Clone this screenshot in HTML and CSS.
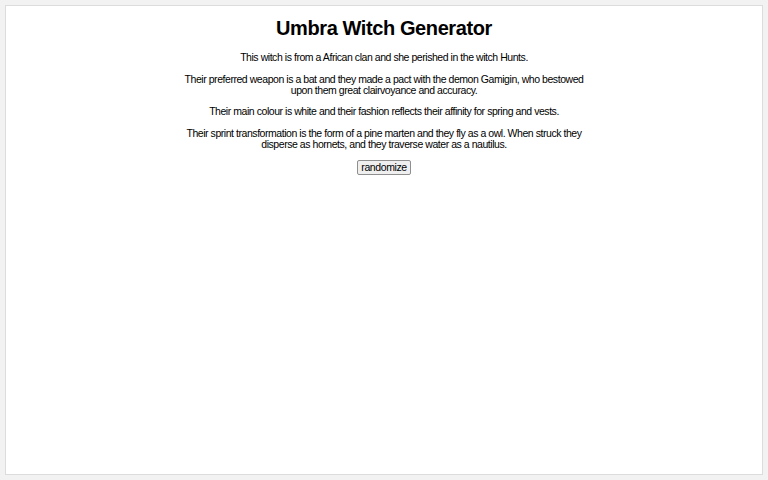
FILE: index.html
```html
<!DOCTYPE html>
<html lang="en">
<head>
    <meta charset="UTF-8">
    <title>Umbra Witch Generator</title>
    <link rel="stylesheet" href="styles.css">
</head>
<body>

    <div class="page">
        <h1>Umbra Witch Generator</h1>

        <div class="witch">
            <p id="origin">This witch is from a African clan and she perished in the witch Hunts.</p>
            <p id="weapon">Their preferred weapon is a bat and they made a pact with the demon Gamigin, who bestowed upon them great clairvoyance and accuracy.</p>
            <p id="fashion">Their main colour is white and their fashion reflects their affinity for spring and vests.</p>
            <p id="forms">Their sprint transformation is the form of a pine marten and they fly as a owl. When struck they disperse as hornets, and they traverse water as a nautilus.</p>
        </div>

        <button onclick="randomize()">randomize</button>
    </div>

    <script>
        function randomize() {
            // just reloads for now, the text above is the current roll
            window.location.reload();
        }
    </script>

</body>
</html>
```

FILE: styles.css
```css
html, body { height: 100%; }
body { font-family: "Liberation Sans", Arial, sans-serif; margin: 0; padding: 5px; box-sizing: border-box; background-color: #f2f2f2; }
.page { height: 100%; box-sizing: border-box; background: white; border: 1px solid #dcdcdc; text-align: center; padding-top: 11px; }
h1 { font-size: 20px; letter-spacing: -0.4px; margin: 0 0 12px; }
.witch { max-width: 410px; margin: 0 auto; }
.witch p { font-size: 10.5px; letter-spacing: -0.45px; line-height: 11px; margin: 0 0 10.5px; }
button { display: block; margin: 0 auto; font-family: "Liberation Sans", Arial, sans-serif; font-size: 10.5px; letter-spacing: -0.4px; line-height: 11px; padding: 1px 3px; background: #efefef; border: 1px solid #8f8f8f; border-radius: 2px; color: black; }
```
